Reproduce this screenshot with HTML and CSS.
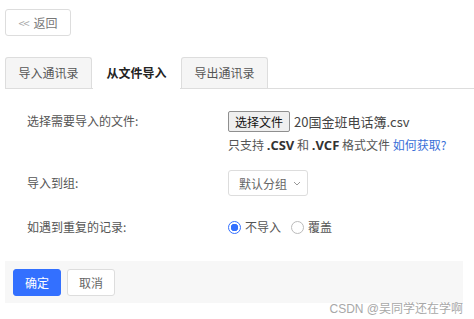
FILE: index.html
```html
<!DOCTYPE html>
<html lang="zh">
<head>
    <meta charset="UTF-8">
    <title>导入通讯录</title>
    <link rel="stylesheet" href="styles.css">
</head>
<body>
    <!-- Назад -->
    <button class="back-btn"><span class="back-arrows">&lt;&lt;</span>返回</button>

    <!-- Вкладки -->
    <div class="tabs">
        <div class="tab">导入通讯录</div>
        <div class="tab active">从文件导入</div>
        <div class="tab">导出通讯录</div>
    </div>

    <!-- Форма -->
    <div class="form">
        <div class="label">选择需要导入的文件:</div>
        <div class="value">
            <div class="file-line">
                <span class="file-btn">选择文件</span>
                <span class="file-name">20国金班电话簿.csv</span>
            </div>
            <div class="hint">只支持 <b>.CSV</b> 和 <b>.VCF</b> 格式文件 <a href="#" class="link">如何获取?</a></div>
        </div>

        <div class="label row-group">导入到组:</div>
        <div class="value row-group">
            <div class="select">默认分组
                <svg width="8" height="5" viewBox="0 0 8 5"><path d="M1 1l3 3 3-3" fill="none" stroke="#999" stroke-width="1"/></svg>
            </div>
        </div>

        <div class="label row-dup">如遇到重复的记录:</div>
        <div class="value row-dup radios">
            <label class="radio"><span class="dot checked"></span>不导入</label>
            <label class="radio"><span class="dot"></span>覆盖</label>
        </div>
    </div>

    <!-- Кнопки -->
    <div class="footer">
        <button class="btn primary">确定</button>
        <button class="btn">取消</button>
    </div>

    <div class="watermark">CSDN @吴同学还在学啊</div>
</body>
</html>
```

FILE: styles.css
```css
/* Общие стили */
body {
    margin: 0;
    padding: 9px 0 0 5px;
    width: 469px;
    height: 310px;
    overflow: hidden;
    position: relative;
    background: #fff;
    font-family: "Noto Sans CJK SC", "Noto Sans", sans-serif;
    font-size: 12px;
    color: #333;
}

.back-btn {
    display: block;
    width: 66px;
    height: 27px;
    padding: 0;
    border: 1px solid #ddd;
    border-radius: 3px;
    background: #fff;
    font-family: inherit;
    font-size: 12px;
    color: #777;
}

.back-arrows {
    margin-right: 5px;
    color: #aaa;
    font-size: 11px;
    letter-spacing: -1px;
}

/* Вкладки */
.tabs {
    display: flex;
    margin-top: 21px;
    height: 31px;
    border-bottom: 1px solid #ddd;
}

.tab {
    width: 87px;
    height: 31px;
    box-sizing: border-box;
    margin-right: 1px;
    border: 1px solid #ddd;
    border-bottom: none;
    border-radius: 3px 3px 0 0;
    background: #f5f5f5;
    color: #555;
    text-align: center;
    line-height: 30px;
}

.tab.active {
    height: 32px;
    background: #fff;
    border-color: #fff;
    font-weight: bold;
    color: #222;
}

/* Форма */
.form {
    display: grid;
    grid-template-columns: 201px auto;
    padding: 20px 0 0 22px;
}

.label {
    color: #555;
    line-height: 24px;
}

.file-line {
    display: flex;
    align-items: center;
    height: 24px;
}

.file-btn {
    display: inline-block;
    height: 19px;
    padding: 0 6px;
    border: 1px solid #8f8f8f;
    border-radius: 2px;
    background: #efefef;
    color: #111;
    line-height: 19px;
}

.file-name {
    margin-left: 4px;
    color: #444;
    font-size: 13px;
}

.hint {
    margin-top: 2px;
    line-height: 20px;
    color: #555;
}

.hint b {
    font-family: "Open Sans", "Liberation Sans", sans-serif;
    font-size: 13px;
    color: #333;
}

.link {
    color: #3a6fd8;
    text-decoration: none;
}

.label.row-group {
    margin-top: 15px;
    line-height: 26px;
}

.value.row-group {
    margin-top: 15px;
}

.select {
    display: inline-flex;
    align-items: center;
    gap: 6px;
    width: 80px;
    height: 26px;
    box-sizing: border-box;
    padding-left: 10px;
    border: 1px solid #ddd;
    border-radius: 3px;
    color: #666;
}

.label.row-dup,
.value.row-dup {
    margin-top: 20px;
    line-height: 22px;
}

.radios {
    display: flex;
    align-items: center;
    gap: 10px;
}

.radio {
    display: flex;
    align-items: center;
    color: #555;
}

.dot {
    width: 13px;
    height: 13px;
    margin-right: 4px;
    border: 1px solid #bbb;
    border-radius: 50%;
    box-sizing: border-box;
}

.dot.checked {
    border-color: #3370ff;
    background: radial-gradient(circle, #3370ff 0 3.5px, #fff 4px);
}

/* Кнопки */
.footer {
    display: flex;
    gap: 6px;
    width: 458px;
    height: 42px;
    box-sizing: border-box;
    margin-top: 23px;
    padding: 8px 0 0 8px;
    background: #f7f7f7;
}

.btn {
    width: 48px;
    height: 27px;
    padding: 0;
    border: 1px solid #ddd;
    border-radius: 3px;
    background: #fff;
    font-family: inherit;
    font-size: 12px;
    color: #666;
}

.btn.primary {
    border-color: #3370ff;
    background: #3370ff;
    color: #fff;
}

.watermark {
    position: absolute;
    right: 11px;
    bottom: 3px;
    font-family: "Liberation Sans", "Noto Sans CJK SC", sans-serif;
    font-size: 12px;
    color: #a8a8a8;
}
```
